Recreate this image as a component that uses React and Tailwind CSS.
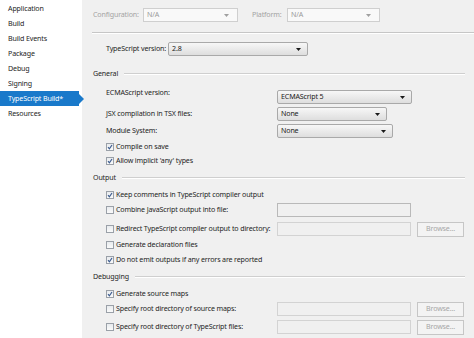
import React from "react";

function Arrow({ color = "#1a1a1a" }) {
  return (
    <svg width="5" height="3" viewBox="0 0 5 3" className="shrink-0">
      <path d="M0 0H5L2.5 3Z" fill={color} />
    </svg>
  );
}

function Select({ w, text }) {
  return (
    <div className={`${w} h-[14px] rounded-[2px] border border-[#a9a9a9] bg-linear-to-b from-[#f7f7f7] to-[#dedede] flex items-center justify-between pl-[3px] pr-[6px] text-[#1b1b1b]`}>
      <span className="leading-none">{text}</span>
      <Arrow />
    </div>
  );
}

function Check({ checked }) {
  return (
    <div className="w-[8px] h-[8px] border border-[#9aa0a8] bg-linear-to-b from-[#e8ebee] to-[#fafafa] flex items-center justify-center shrink-0">
      {checked && (
        <svg width="6" height="6" viewBox="0 0 6 6">
          <path d="M1 3.2L2.4 4.8L5 1" stroke="#3d5c8f" strokeWidth="1.2" fill="none" />
        </svg>
      )}
    </div>
  );
}

function CheckRow({ checked, label, mt, children }) {
  return (
    <div className={`${mt} h-[14px] flex items-center pl-[24px]`}>
      <div className="w-[171px] flex items-center gap-[2px] shrink-0">
        <Check checked={checked} />
        <span className="leading-none whitespace-nowrap">{label}</span>
      </div>
      {children}
    </div>
  );
}

function Input({ border = "border-[#c2c2c2]" }) {
  return <div className={`w-[134px] h-[14px] border ${border} bg-[#f0f0f0]`} />;
}

function Browse() {
  return (
    <div className="ml-[6px] w-[47px] h-[15px] border border-[#c6c6c6] bg-[#f3f3f3] flex items-center justify-center text-[#a7a7a7] leading-none">
      Browse...
    </div>
  );
}

function Header({ label, mt }) {
  return (
    <div className={`${mt} h-[14px] flex items-center pl-[11px] pr-[9px]`}>
      <span className="leading-none">{label}</span>
      <div className="flex-1 ml-[6px] h-[2px] border-t border-[#cfcfcf] border-b border-b-white" />
    </div>
  );
}

export default function App() {
  const items = [
    "Application",
    "Build",
    "Build Events",
    "Package",
    "Debug",
    "Signing",
    "TypeScript Build*",
    "Resources",
  ];
  return (
    <div className="w-[474px] h-[338px] flex overflow-hidden font-['Noto_Sans',sans-serif] text-[7.1px] tracking-[-0.15px] text-[#1e1e1e] bg-white">
      <div className="w-[82px] shrink-0 bg-white flex flex-col relative z-10 pt-[1px]">
        {items.map((it) => {
          const sel = it === "TypeScript Build*";
          return (
            <div
              key={it}
              className={`h-[15px] flex items-center pl-[8px] relative ${sel ? "bg-[#1979ca] text-white w-[79px]" : "text-[#1e1e1e]"}`}
            >
              <span className="leading-none whitespace-nowrap">{it}</span>
              {sel && (
                <div className="absolute right-[-5px] top-[2.5px] w-0 h-0 border-t-[5px] border-b-[5px] border-l-[5px] border-t-transparent border-b-transparent border-l-[#1979ca]" />
              )}
            </div>
          );
        })}
      </div>
      <div className="flex-1 bg-[#f0f0f0] flex flex-col">
        <div className="mt-[8px] h-[14px] flex items-center pl-[11px] text-[#a3a3a3]">
          <span className="w-[50px] leading-none">Configuration:</span>
          <div className="w-[95px] h-[14px] border border-[#cfcfcf] bg-[#f9f9f9] flex items-center justify-between pl-[3px] pr-[8px]">
            <span className="leading-none text-[#9a9a9a]">N/A</span>
            <Arrow color="#a0a0a0" />
          </div>
          <span className="ml-[14px] w-[35px] leading-none">Platform:</span>
          <div className="w-[93px] h-[14px] border border-[#cfcfcf] bg-[#f9f9f9] flex items-center justify-between pl-[3px] pr-[8px]">
            <span className="leading-none text-[#9a9a9a]">N/A</span>
            <Arrow color="#a0a0a0" />
          </div>
        </div>
        <div className="mt-[10px] ml-[10px] h-[2px] border-t border-[#c6c6c6] border-b border-b-white" />
        <div className="mt-[8px] h-[14px] flex items-center pl-[24px]">
          <span className="w-[62px] leading-none whitespace-nowrap">TypeScript version:</span>
          <Select w="w-[140px]" text="2.8" />
        </div>

        <Header label="General" mt="mt-[11px]" />
        <div className="mt-[9px] h-[14px] flex items-center pl-[24px]">
          <span className="w-[171px] leading-none mb-[8px]">ECMAScript version:</span>
          <Select w="w-[135px]" text="ECMAScript 5" />
        </div>
        <div className="mt-[3px] h-[14px] flex items-center pl-[24px]">
          <span className="w-[171px] leading-none">JSX compilation in TSX files:</span>
          <Select w="w-[110px]" text="None" />
        </div>
        <div className="mt-[3px] h-[14px] flex items-center pl-[24px]">
          <span className="w-[171px] leading-none">Module System:</span>
          <Select w="w-[116px]" text="None" />
        </div>
        <CheckRow checked label="Compile on save" mt="mt-[2px]" />
        <CheckRow checked label="Allow implicit 'any' types" mt="mt-[0px]" />

        <Header label="Output" mt="mt-[3px]" />
        <CheckRow checked label="Keep comments in TypeScript compiler output" mt="mt-[3px]" />
        <CheckRow label="Combine JavaScript output into file:" mt="mt-[1px]">
          <Input border="border-[#b9b9b9]" />
        </CheckRow>
        <CheckRow label="Redirect TypeScript compiler output to directory:" mt="mt-[5px]">
          <Input border="border-[#d3d3d3]" />
          <Browse />
        </CheckRow>
        <CheckRow label="Generate declaration files" mt="mt-[2px]" />
        <CheckRow checked label="Do not emit outputs if any errors are reported" mt="mt-[1px]" />

        <Header label="Debugging" mt="mt-[3px]" />
        <CheckRow checked label="Generate source maps" mt="mt-[3px]" />
        <CheckRow label="Specify root directory of source maps:" mt="mt-[1px]">
          <Input border="border-[#d3d3d3]" />
          <Browse />
        </CheckRow>
        <CheckRow label="Specify root directory of TypeScript files:" mt="mt-[4px]">
          <Input border="border-[#d3d3d3]" />
          <Browse />
        </CheckRow>
      </div>
    </div>
  );
}
